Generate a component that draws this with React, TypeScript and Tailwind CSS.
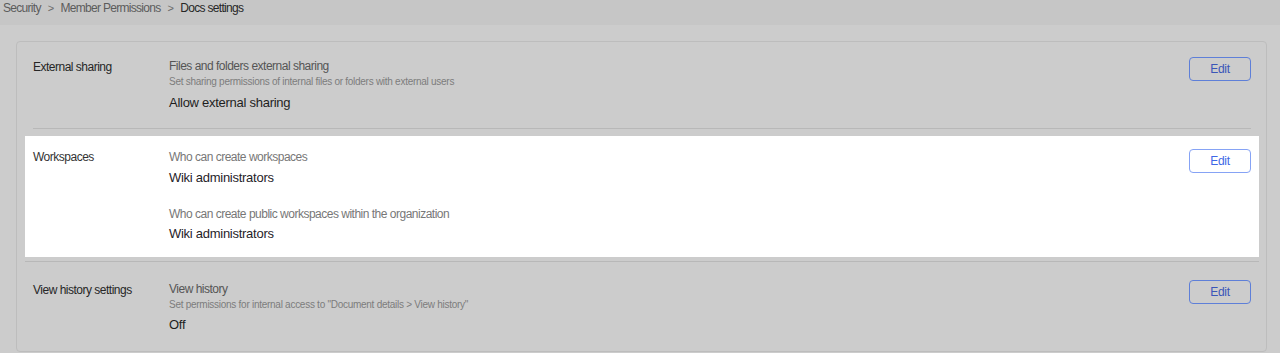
import React from 'react';

const font = { fontFamily: '"Liberation Sans", Arial, sans-serif' };

const EditButton: React.FC<{ lit?: boolean }> = ({ lit }) => (
    <button
        className={
            lit
                ? "w-[62px] h-[24px] rounded-[4px] border border-[#86a3f5] text-[12px] tracking-[-0.3px] text-[#3e68e6] bg-white"
                : "w-[62px] h-[24px] -mt-px rounded-[4px] border border-[#5e7fd8] text-[12px] tracking-[-0.3px] text-[#3a56b8] bg-transparent"
        }
    >
        Edit
    </button>
);

const App: React.FC = () => {
    return (
        <div className="w-[1280px] h-[353px] bg-[#cccccc] overflow-hidden" style={font}>
            {/* breadcrumb */}
            <div className="h-[25px] bg-[#c6c6c6] flex items-start pl-[3px] text-[12px] leading-[16px] tracking-[-0.7px]">
                <span className="text-[#5c5c5c]">Security</span>
                <span className="text-[#6a6a6a] mx-[7px] text-[11px]">&gt;</span>
                <span className="text-[#5c5c5c]">Member Permissions</span>
                <span className="text-[#6a6a6a] mx-[7px] text-[11px]">&gt;</span>
                <span className="text-[#262626]">Docs settings</span>
            </div>

            <div className="pl-4 pr-[13px] pt-4">
                <div className="h-[311px] rounded-[4px] border border-[#bdbdbd] bg-[#cccccc] pl-4 pr-[15px]">
                    {/* External sharing */}
                    <div className="flex pt-[16px] h-[87px] border-b border-[#b8b8b8]">
                        <div className="w-[136px] text-[12px] leading-[16px] pt-[1px] tracking-[-0.5px] text-[#262626]">External sharing</div>
                        <div className="flex-1">
                            <div className="text-[12px] leading-[16px] tracking-[-0.5px] text-[#555555]">Files and folders external sharing</div>
                            <div className="text-[10px] leading-[16px] tracking-[-0.27px] text-[#7c7c7c]">Set sharing permissions of internal files or folders with external users</div>
                            <div className="text-[13px] leading-[20px] mt-[3px] tracking-[-0.27px] text-[#1e1e1e]">Allow external sharing</div>
                        </div>
                        <EditButton />
                    </div>

                    {/* Workspaces (highlighted) */}
                    <div className="pt-[7px] pb-[4px] border-b border-[#b8b8b8] -ml-2 -mr-2">
                        <div className="bg-white h-[121px] flex pl-2 pr-2 pt-[13px]">
                            <div className="w-[136px] text-[12px] leading-[16px] tracking-[-0.5px] text-[#333333]">Workspaces</div>
                            <div className="flex-1">
                                <div className="text-[12px] leading-[16px] tracking-[-0.5px] text-[#777777]">Who can create workspaces</div>
                                <div className="text-[13px] leading-[20px] mt-[3px] tracking-[-0.27px] text-[#1f2329]">Wiki administrators</div>
                                <div className="text-[12px] leading-[16px] mt-[18px] tracking-[-0.5px] text-[#777777]">Who can create public workspaces within the organization</div>
                                <div className="text-[13px] leading-[20px] mt-[2px] tracking-[-0.27px] text-[#1f2329]">Wiki administrators</div>
                            </div>
                            <EditButton lit />
                        </div>
                    </div>

                    {/* View history */}
                    <div className="flex pt-[19px]">
                        <div className="w-[136px] text-[12px] leading-[16px] pt-[1px] tracking-[-0.5px] text-[#262626]">View history settings</div>
                        <div className="flex-1">
                            <div className="text-[12px] leading-[16px] tracking-[-0.5px] text-[#555555]">View history</div>
                            <div className="text-[10px] leading-[16px] tracking-[-0.27px] text-[#7c7c7c]">Set permissions for internal access to "Document details &gt; View history"</div>
                            <div className="text-[13px] leading-[20px] mt-[2px] tracking-[-0.27px] text-[#1e1e1e]">Off</div>
                        </div>
                        <EditButton />
                    </div>
                </div>
            </div>
        </div>
    );
};

export default App;
